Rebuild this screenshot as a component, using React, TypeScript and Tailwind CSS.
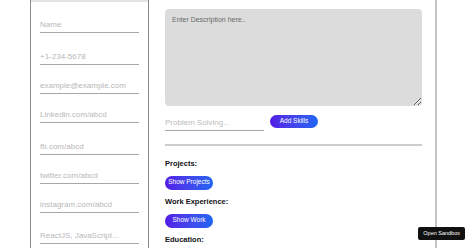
import React from 'react';

const contactFields = [
    { placeholder: 'Name', mt: 'mt-[17px]' },
    { placeholder: '+1-234-5678', mt: 'mt-[16px]' },
    { placeholder: 'example@example.com', mt: 'mt-[13px]' },
    { placeholder: 'Linkedin.com/abcd', mt: 'mt-[13px]' },
    { placeholder: 'fb.com/abcd', mt: 'mt-[16px]' },
    { placeholder: 'twitter.com/abcd', mt: 'mt-[13px]' },
    { placeholder: 'instagram.com/abcd', mt: 'mt-[13px]' },
    { placeholder: 'ReactJS, JavaScript...', mt: 'mt-[15px]' },
];

const GradientButton: React.FC<{ children: React.ReactNode; className?: string }> = ({ children, className }) => (
    <button
        className={`h-[14px] w-[48px] rounded-full bg-gradient-to-r from-[#5219e6] to-[#1c64f2] text-[6.5px] leading-none text-white ${className ?? ''}`}
    >
        {children}
    </button>
);

const App: React.FC = () => {
    return (
        <div className="flex h-[248px] w-[474px] overflow-hidden bg-white font-['Liberation_Sans',Arial,sans-serif]">
            <div className="w-[30px] shrink-0" />

            {/* contact column */}
            <div className="relative flex w-[119px] shrink-0 flex-col border-x-[1.5px] border-[#8a8a8a] pl-[9px]">
                <div className="absolute left-0 right-0 top-0 h-[2px] bg-[#e4e4e4]" />
                {contactFields.map((f) => (
                    <input
                        key={f.placeholder}
                        placeholder={f.placeholder}
                        className={`${f.mt} h-[16px] w-[99px] shrink-0 border-b-[1.5px] border-[#a8a8a8] bg-transparent text-[8px] leading-none outline-none placeholder:text-[#b8b8b8]`}
                    />
                ))}
            </div>

            {/* main column */}
            <div className="flex w-[288px] shrink-0 flex-col border-r-2 border-[#c4c4c4] pl-[16px] pr-[15px]">
                <textarea
                    placeholder="Enter Description here.."
                    className="mt-[9px] h-[97px] w-[257px] shrink-0 rounded-[4px] bg-[#dcdcdc] px-[7px] py-[6px] text-[7px] outline-none placeholder:text-[#6a6a6a]"
                />

                <div className="mt-[9px] flex items-start gap-[6px]">
                    <input
                        placeholder="Problem Solving..."
                        className="h-[16px] w-[99px] border-b-[1.5px] border-[#a8a8a8] bg-transparent text-[8px] leading-none outline-none placeholder:text-[#bcbcbc]"
                    />
                    <button className="h-[13px] w-[48px] rounded-full bg-gradient-to-r from-[#5219e6] to-[#1c64f2] text-[6.5px] leading-none text-white">
                        Add Skills
                    </button>
                </div>

                <div className="mt-[13px] h-[1.5px] w-[257px] bg-[#cccccc]" />

                <div className="mt-[13px] text-[7.5px] font-bold leading-[10px] text-[#111]">Projects:</div>
                <GradientButton className="mt-[7px]">Show Projects</GradientButton>
                <div className="mt-[7px] text-[7.5px] font-bold leading-[10px] text-[#111]">Work Experience:</div>
                <GradientButton className="mt-[7px]">Show Work</GradientButton>
                <div className="mt-[7px] text-[7.5px] font-bold leading-[10px] text-[#111]">Education:</div>
            </div>

            <div className="relative flex-1">
                <div className="absolute bottom-[8px] right-[9px] flex h-[13px] items-center whitespace-nowrap rounded-[2px] bg-[#111] px-[5px] text-[5.5px] leading-none text-white">
                    Open Sandbox
                </div>
            </div>
        </div>
    );
};

export default App;
